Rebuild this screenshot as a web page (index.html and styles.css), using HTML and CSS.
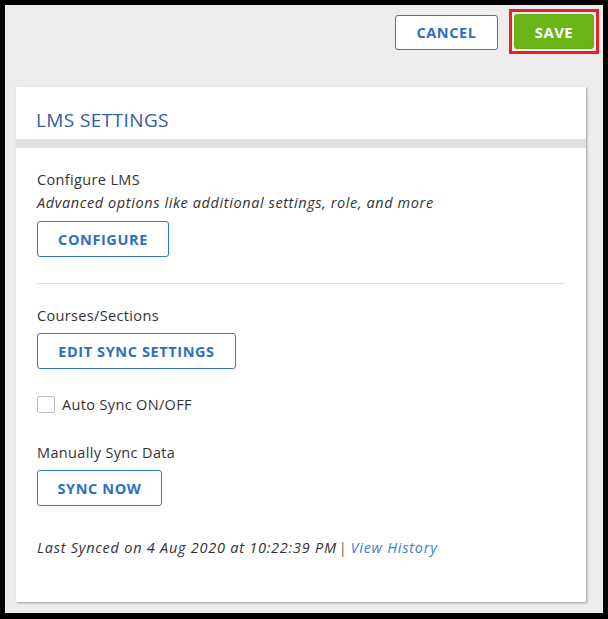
FILE: index.html
```html
<!DOCTYPE html>
<html lang="en">
<head>
<meta charset="utf-8">
<title>LMS Settings</title>
<link rel="stylesheet" href="styles.css">
</head>
<body>
<div class="screen">
  <div class="topbar">
    <button class="btn btn-outline">CANCEL</button>
    <span class="highlight"><button class="btn btn-save">SAVE</button></span>
  </div>
  <div class="card">
    <div class="card-header">LMS SETTINGS</div>
    <div class="card-body">
      <div class="section">
        <div class="label">Configure LMS</div>
        <div class="desc">Advanced options like additional settings, role, and more</div>
        <button class="btn btn-outline btn-configure">CONFIGURE</button>
      </div>
      <hr class="divider">
      <div class="section section-courses">
        <div class="label">Courses/Sections</div>
        <button class="btn btn-outline btn-edit">EDIT SYNC SETTINGS</button>
      </div>
      <label class="check-row">
        <span class="checkbox"></span>
        <span class="check-label">Auto Sync ON/OFF</span>
      </label>
      <div class="section section-manual">
        <div class="label">Manually Sync Data</div>
        <button class="btn btn-outline btn-sync">SYNC NOW</button>
      </div>
      <div class="last-synced">Last Synced on 4 Aug 2020 at 10:22:39 PM<span class="sep">|</span><a class="link" href="#">View History</a></div>
    </div>
  </div>
</div>
</body>
</html>
```

FILE: styles.css
```css
html, body {
  margin: 0;
  padding: 0;
  background: #000;
}

body {
  font-family: "Open Sans", "Lato", sans-serif;
  color: #333;
}

.screen {
  box-sizing: border-box;
  width: 608px;
  height: 619px;
  border: 5px solid #000;
  border-bottom-width: 6px;
  background: #ededed;
  padding: 10px 10px 0 11px;
}

.topbar {
  display: flex;
  justify-content: flex-end;
  align-items: flex-start;
  gap: 11px;
  height: 35px;
}

.btn {
  box-sizing: border-box;
  font-family: inherit;
  font-size: 14.5px;
  font-weight: 700;
  letter-spacing: 0.6px;
  border-radius: 3px;
  cursor: pointer;
  padding: 0;
  height: 36px;
}

.btn-outline {
  background: #fff;
  border: 1px solid #2f7ad0;
  color: #2d6fc2;
}

.topbar .btn {
  height: 35px;
  display: block;
}

.topbar .btn-outline {
  width: 103px;
}

.highlight {
  display: block;
  margin-top: -6px;
  margin-right: -6px;
  padding: 2px;
  border: 3px solid #e8202c;
}

.btn-save {
  width: 80px;
  background: #6cb518;
  border: 1px solid #65ad14;
  color: #fff;
  font-size: 15px;
  letter-spacing: 0.4px;
}

.card {
  margin-top: 37px;
  width: 570px;
  height: 515px;
  background: #fff;
  box-shadow: 1px 1px 2px rgba(0, 0, 0, 0.35);
}

.card-header {
  box-sizing: border-box;
  height: 61px;
  padding: 20px 20px 0;
  line-height: 26px;
  font-size: 19px;
  letter-spacing: 0.4px;
  color: #2f5da4;
  border-bottom: 9px solid #e0e0e0;
}

.card-body {
  padding: 20px 21px 0;
}

.label,
.desc,
.check-label,
.last-synced {
  font-size: 14.5px;
  line-height: 23px;
  letter-spacing: 0.35px;
}

.desc,
.last-synced {
  font-style: italic;
  letter-spacing: 0.6px;
}

.last-synced {
  letter-spacing: 0.75px;
}

.section .btn {
  display: block;
  margin-top: 7px;
}

.btn-configure { width: 132px; }
.btn-edit { width: 199px; }
.btn-sync { width: 125px; }

.divider {
  border: 0;
  border-top: 1px solid #e3e3e3;
  margin: 26px 0 0;
}

.section-courses {
  margin-top: 20px;
}

.section-courses .btn {
  margin-top: 6px;
}

.check-row {
  display: flex;
  align-items: center;
  gap: 7px;
  margin-top: 24px;
  height: 23px;
}

.checkbox {
  box-sizing: border-box;
  width: 18px;
  height: 17px;
  border: 1px solid #bdbdbd;
  border-radius: 2px;
  background: #fff;
}

.section-manual {
  margin-top: 25px;
}

.section-manual .btn {
  margin-top: 6px;
}

.last-synced {
  margin-top: 30px;
}

.sep {
  color: #666;
  margin: 0 3px 0 2px;
  font-style: normal;
}

.link {
  color: #3d7ed6;
  text-decoration: none;
}
```
